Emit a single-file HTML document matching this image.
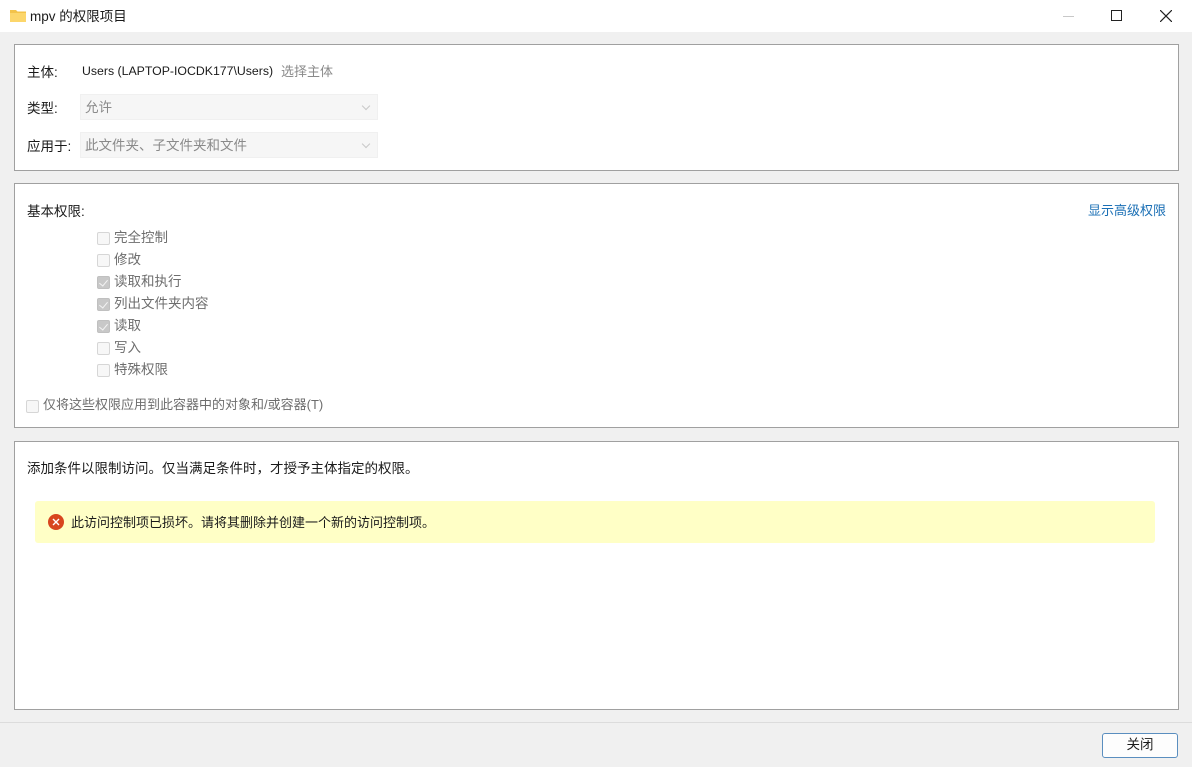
<!DOCTYPE html>
<html><head><meta charset="utf-8"><style>
*{margin:0;padding:0;box-sizing:border-box}
body{width:1192px;height:767px;background:#f0f0f0;font-family:"Liberation Sans","Noto Sans CJK SC",sans-serif;font-size:13px;color:#1a1a1a;position:relative;overflow:hidden}
.abs{position:absolute}
.title{left:0;top:0;width:1192px;height:32px;background:#fff}
.panel{background:#fff;border:1px solid #a0a0a0;left:14px;width:1165px}
.cb{position:absolute;width:13px;height:13px;border:1px solid #d6d6d6;border-radius:2px;background:#f7f7f7}
.cb.on{background:#c8c8c8;border-color:#c0c0c0}
.cb.on::after{content:"";position:absolute;left:3px;top:1px;width:4px;height:7px;border:solid #f4f4f4;border-width:0 1.5px 1.5px 0;transform:rotate(40deg)}
.lbl{position:absolute;color:#6d6d6d;font-size:13.5px}
.sel{position:absolute;width:298px;height:26px;background:#f6f6f6;border:1px solid #f0f0f0;color:#8a8a8a;padding:1px 4px;font-size:13.5px}
.sel::after{content:"";position:absolute;right:8px;top:8px;width:5px;height:5px;border:solid #c8c8c8;border-width:0 1px 1px 0;transform:rotate(45deg)}
</style></head><body>
<div class="abs title">
<svg class="abs" style="left:10px;top:9px" width="16" height="13"><path d="M0 1h6l1.5 1.5H16V13H0z" fill="#f3c34a"/><path d="M0 4h16v9H0z" fill="#fcd66b"/></svg>
<div class="abs" style="left:30px;top:5px;font-size:13.5px">mpv 的权限项目</div>
<div class="abs" style="left:1063px;top:16px;width:11px;height:1px;background:#c8c8c8"></div>
<div class="abs" style="left:1111px;top:10px;width:11px;height:11px;border:1px solid #222"></div>
<svg class="abs" style="left:1160px;top:10px" width="12" height="12"><path d="M0 0L12 12M12 0L0 12" stroke="#222" stroke-width="1.2"/></svg>
</div>
<div class="abs panel" style="top:44px;height:127px">
<div class="abs" style="left:12px;top:16px;font-size:13.5px">主体:</div>
<div class="abs" style="left:67px;top:19px;font-size:12.3px">Users (LAPTOP-IOCDK177\Users)</div>
<div class="abs" style="left:266px;top:16px;color:#8a8a8a;font-size:13px">选择主体</div>
<div class="abs" style="left:12px;top:52px;font-size:13.5px">类型:</div>
<div class="sel" style="left:65px;top:49px">允许</div>
<div class="abs" style="left:12px;top:90px;font-size:13.5px">应用于:</div>
<div class="sel" style="left:65px;top:87px">此文件夹、子文件夹和文件</div>
</div>
<div class="abs panel" style="top:183px;height:245px">
<div class="abs" style="left:12px;top:16px;font-size:13.5px">基本权限:</div>
<div class="abs" style="right:12px;top:16px;color:#1a6fb5;font-size:13px">显示高级权限</div>
<div class="cb" style="left:82px;top:48px"></div><div class="lbl" style="left:99px;top:42px">完全控制</div>
<div class="cb" style="left:82px;top:70px"></div><div class="lbl" style="left:99px;top:64px">修改</div>
<div class="cb on" style="left:82px;top:92px"></div><div class="lbl" style="left:99px;top:86px">读取和执行</div>
<div class="cb on" style="left:82px;top:114px"></div><div class="lbl" style="left:99px;top:108px">列出文件夹内容</div>
<div class="cb on" style="left:82px;top:136px"></div><div class="lbl" style="left:99px;top:130px">读取</div>
<div class="cb" style="left:82px;top:158px"></div><div class="lbl" style="left:99px;top:152px">写入</div>
<div class="cb" style="left:82px;top:180px"></div><div class="lbl" style="left:99px;top:174px">特殊权限</div>
<div class="cb" style="left:11px;top:216px"></div><div class="lbl" style="left:28px;top:210px;font-size:13px">仅将这些权限应用到此容器中的对象和/或容器(T)</div>
</div>
<div class="abs panel" style="top:441px;height:269px">
<div class="abs" style="left:12px;top:15px;font-size:13.5px">添加条件以限制访问。仅当满足条件时，才授予主体指定的权限。</div>
<div class="abs" style="left:20px;top:59px;width:1120px;height:42px;background:#ffffc6;border-radius:3px"></div>
<svg class="abs" style="left:33px;top:72px" width="16" height="16"><circle cx="8" cy="8" r="8" fill="#d8461e"/><path d="M5 5l6 6M11 5l-6 6" stroke="#fff" stroke-width="1.4"/></svg>
<div class="abs" style="left:56px;top:70px;font-size:13px">此访问控制项已损坏。请将其删除并创建一个新的访问控制项。</div>
</div>
<div class="abs" style="left:0;top:722px;width:1192px;height:1px;background:#dcdcdc"></div>
<div class="abs" style="left:1102px;top:733px;width:76px;height:25px;background:#fdfdfd;border:1px solid #5a8ebf;border-radius:3px;text-align:center;line-height:22px;font-size:13.5px">关闭</div>
</body></html>
